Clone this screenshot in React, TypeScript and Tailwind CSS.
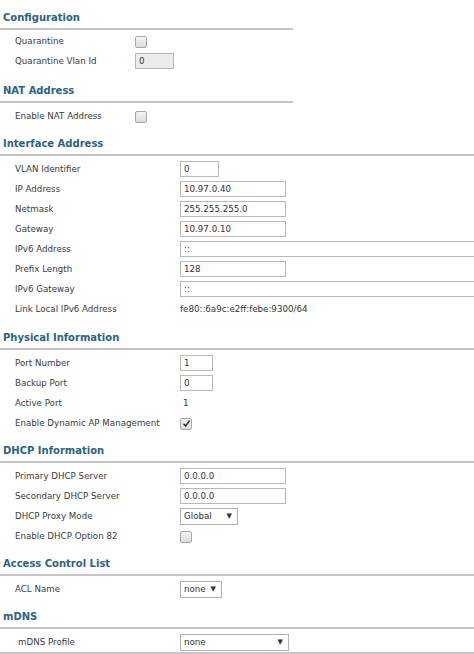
import React from "react";

const font = { fontFamily: '"DejaVu Sans", Verdana, sans-serif' };

function Header({ title, narrow, mt }: { title: string; narrow?: boolean; mt: string }) {
  return (
    <div
      className={`${mt} ${narrow ? "w-[293px]" : "w-full"} h-[30px] pt-[11px] pl-[3px] border-b-2 border-[#c6c6c6] text-[10px] leading-[14px] font-bold text-[#2c6282]`}
    >
      {title}
    </div>
  );
}

function Row({ label, col, children, indent }: { label: string; col: string; children?: React.ReactNode; indent?: string }) {
  return (
    <div className="flex h-[20px] items-center">
      <div className={`${indent ?? "pl-[15px]"} ${col} pt-[1px] shrink-0 text-[8.7px] text-[#3a3a3a] whitespace-nowrap`}>{label}</div>
      <div className="flex items-center">{children}</div>
    </div>
  );
}

function Input({ value, w, disabled }: { value: string; w: string; disabled?: boolean }) {
  return (
    <div
      className={`${w} h-[16px] shrink-0 border border-[#b8b8b8] ${disabled ? "bg-[#ebebeb]" : "bg-white"} pl-[3px] pt-[1px] text-[8.7px] leading-[13px] text-[#333] whitespace-nowrap overflow-hidden`}
    >
      {value}
    </div>
  );
}

function Check({ checked }: { checked?: boolean }) {
  return (
    <div className="mt-[1px] w-[12px] h-[12px] rounded-[2px] border border-[#a9a9a9] bg-gradient-to-b from-[#f4f4f4] to-[#dcdcdc] flex items-center justify-center">
      {checked && (
        <svg width="9" height="9" viewBox="0 0 9 9">
          <path d="M1.5 4.8 L3.6 7 L7.6 1.6" fill="none" stroke="#333" strokeWidth="1.6" />
        </svg>
      )}
    </div>
  );
}

function Select({ value, w }: { value: string; w: string }) {
  return (
    <div className={`${w} h-[17px] border border-[#b0b0b0] bg-white flex items-center justify-between pl-[3px] pr-[5px] pt-[1px] text-[8.7px] text-[#333]`}>
      <span>{value}</span>
      <span className="text-[7px] leading-none">▼</span>
    </div>
  );
}

export default function App() {
  return (
    <div className="w-[474px] h-[654px] overflow-hidden bg-white" style={font}>
      <Header title="Configuration" narrow mt="mt-0" />
      <div className="pt-[1px]">
        <Row label="Quarantine" col="w-[135px]"><Check /></Row>
        <Row label="Quarantine Vlan Id" col="w-[135px]"><Input value="0" w="w-[39px]" disabled /></Row>
      </div>

      <Header title="NAT Address" narrow mt="mt-[2px]" />
      <div className="pt-[3px]">
        <Row label="Enable NAT Address" col="w-[135px]"><Check /></Row>
      </div>

      <Header title="Interface Address" mt="mt-0" />
      <div className="pt-[3px]">
        <Row label="VLAN Identifier" col="w-[180px]"><Input value="0" w="w-[39px]" /></Row>
        <Row label="IP Address" col="w-[180px]"><Input value="10.97.0.40" w="w-[106px]" /></Row>
        <Row label="Netmask" col="w-[180px]"><Input value="255.255.255.0" w="w-[106px]" /></Row>
        <Row label="Gateway" col="w-[180px]"><Input value="10.97.0.10" w="w-[106px]" /></Row>
        <Row label="IPv6 Address" col="w-[180px]"><Input value="::" w="w-[310px]" /></Row>
        <Row label="Prefix Length" col="w-[180px]"><Input value="128" w="w-[106px]" /></Row>
        <Row label="IPv6 Gateway" col="w-[180px]"><Input value="::" w="w-[310px]" /></Row>
        <Row label="Link Local IPv6 Address" col="w-[180px]">
          <span className="pt-[1px] text-[8.7px] text-[#333]">fe80::6a9c:e2ff:febe:9300/64</span>
        </Row>
      </div>

      <Header title="Physical Information" mt="mt-[1px]" />
      <div className="pt-[3px]">
        <Row label="Port Number" col="w-[180px]"><Input value="1" w="w-[33px]" /></Row>
        <Row label="Backup Port" col="w-[180px]"><Input value="0" w="w-[33px]" /></Row>
        <Row label="Active Port" col="w-[180px]">
          <span className="pl-[3px] pt-[1px] text-[8.7px] text-[#333]">1</span>
        </Row>
        <Row label="Enable Dynamic AP Management" col="w-[180px]"><Check checked /></Row>
      </div>

      <Header title="DHCP Information" mt="mt-0" />
      <div className="pt-[3px]">
        <Row label="Primary DHCP Server" col="w-[180px]"><Input value="0.0.0.0" w="w-[106px]" /></Row>
        <Row label="Secondary DHCP Server" col="w-[180px]"><Input value="0.0.0.0" w="w-[106px]" /></Row>
        <Row label="DHCP Proxy Mode" col="w-[180px]"><Select value="Global" w="w-[58px]" /></Row>
        <Row label="Enable DHCP Option 82" col="w-[180px]"><Check /></Row>
      </div>

      <Header title="Access Control List" mt="mt-0" />
      <div className="pt-[3px]">
        <Row label="ACL Name" col="w-[180px]"><Select value="none" w="w-[42px]" /></Row>
      </div>

      <Header title="mDNS" mt="mt-0" />
      <div className="pt-[3px] border-b-2 border-[#c6c6c6] w-full">
        <Row label="mDNS Profile" col="w-[180px]" indent="pl-[18px]"><Select value="none" w="w-[109px]" /></Row>
      </div>
    </div>
  );
}
